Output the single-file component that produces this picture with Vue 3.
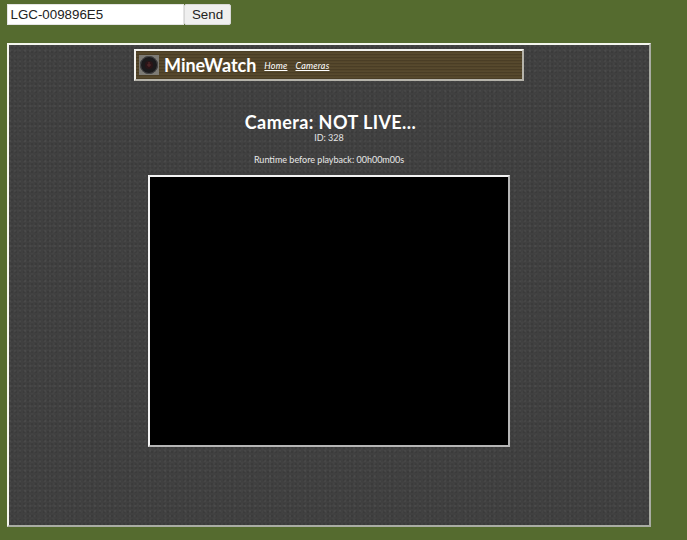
<script setup>
const links = ['Home', 'Cameras']
</script>

<template>
  <div class="page">
    <form class="sendbar" @submit.prevent>
      <input class="field" value="LGC-009896E5" />
      <button class="send" type="button">Send</button>
    </form>
    <main class="frame">
      <nav class="nav">
        <svg class="logo" width="20" height="20" viewBox="0 0 20 20">
          <rect width="20" height="20" fill="#7d7b75" />
          <circle cx="10" cy="10" r="9" fill="#1b1a1c" />
          <circle cx="10" cy="10" r="8.5" fill="none" stroke="#4a4a4c" stroke-width="1" />
          <circle cx="10" cy="10" r="4" fill="#2a1518" />
          <path d="M10 7v5M8 10h4" stroke="#5a2a2a" stroke-width="1" />
        </svg>
        <span class="brand">MineWatch</span>
        <a v-for="l in links" :key="l" class="link" href="#">{{ l }}</a>
      </nav>
      <h1 class="title">Camera: NOT LIVE...</h1>
      <p class="id">ID: 328</p>
      <p class="runtime">Runtime before playback: 00h00m00s</p>
      <div class="video"></div>
    </main>
  </div>
</template>

<style>
html, body { margin: 0; background: #556b2f; }
</style>

<style scoped>
.page {
  height: 540px;
  overflow: hidden;
  background: #556b2f;
  padding: 4px 0 0 7px;
  box-sizing: border-box;
}
.sendbar { display: flex; height: 21px; }
.field {
  width: 177px;
  height: 21px;
  box-sizing: border-box;
  border: 1px solid #e4e4e4;
  padding: 0 2px 0 2.5px;
  margin: 0;
  background: #fff;
  color: #222;
  font: 13.33px "Liberation Sans", Arial, sans-serif;
  outline: none;
}
.send {
  width: 47px;
  height: 21px;
  margin: 0;
  padding: 0;
  border: 1px solid #d8d8d8;
  border-radius: 2px;
  background: #efefef;
  color: #222;
  font: 13.33px "Liberation Sans", Arial, sans-serif;
}
.frame {
  width: 644px;
  height: 484px;
  margin-top: 18px;
  box-sizing: border-box;
  border: 2px solid;
  border-color: #f4f6ee #a9aca3 #a9aca3 #f4f6ee;
  padding-top: 4px;
  background-color: #404040;
  background-image:
    radial-gradient(circle at 1px 1px, rgba(255,255,255,.035) 1px, transparent 1.5px),
    radial-gradient(circle at 3px 3px, rgba(0,0,0,.07) 1px, transparent 1.5px),
    radial-gradient(circle at 2px 5px, rgba(255,255,255,.025) 1px, transparent 2px);
  background-size: 5px 5px, 4px 4px, 7px 7px;
  color: #fff;
  font-family: Lato, "Open Sans", sans-serif;
  text-align: center;
}
.nav {
  display: flex;
  align-items: center;
  width: 390px;
  height: 32px;
  margin-left: 125px;
  box-sizing: border-box;
  border: 2px solid;
  border-color: #f2f2ee #b5b3aa #b5b3aa #f2f2ee;
  padding-left: 3px;
  background-color: #54462a;
  background-image: repeating-linear-gradient(0deg, rgba(0,0,0,.12) 0 1px, rgba(255,255,255,.02) 1px 2px, transparent 2px 3px);
}
.logo { flex: none; }
.brand {
  margin: 0 8px 0 5px;
  font-size: 18px;
  font-weight: 700;
  color: #fff;
}
.link {
  margin-right: 8px;
  color: #fff;
  font-size: 9px;
  font-style: italic;
  font-weight: 400;
  letter-spacing: .2px;
  text-decoration: underline;
}
.title {
  margin: 29px 0 0 3px;
  font-size: 18px;
  line-height: 24px;
  font-weight: 700;
  letter-spacing: .42px;
}
.id {
  margin: -2px 0 0 0;
  font-size: 9px;
  line-height: 12px;
  color: #e4e4e4;
}
.runtime {
  margin: 10px 0 0;
  font-size: 9px;
  line-height: 12px;
  color: #e8e8e8;
}
.video {
  width: 362px;
  height: 272px;
  margin: 9px 0 0 139px;
  box-sizing: border-box;
  border: 2px solid;
  border-color: #f4f4f4 #b5b5b5 #b5b5b5 #f4f4f4;
  background: #000;
}
</style>
